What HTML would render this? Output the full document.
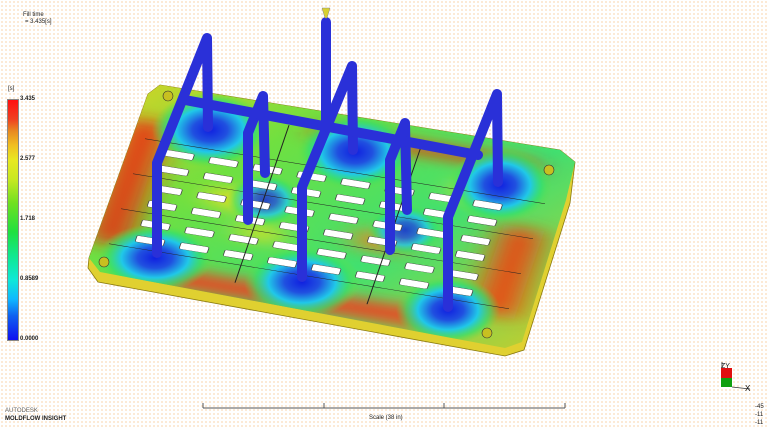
<!DOCTYPE html>
<html><head><meta charset="utf-8"><style>
html,body{margin:0;padding:0}
body{width:768px;height:428px;overflow:hidden;position:relative;background-color:#fff;
background-image:radial-gradient(circle,rgba(245,190,130,0.55) 0.7px,transparent 1px);background-size:4px 4px;
font-family:"Liberation Sans",sans-serif;}
.t{position:absolute;font-size:6px;color:#222;line-height:7px;white-space:nowrap}
</style></head><body>
<div class="t" style="left:23px;top:12px">Fill time</div>
<div class="t" style="left:25px;top:19px">= 3.435[s]</div>
<div class="t" style="left:8px;top:86px">[s]</div>
<div style="position:absolute;left:7px;top:99px;width:10px;height:240px;border:1px solid #888;background:linear-gradient(#ff1010 0%,#f04020 8%,#e88a20 13%,#f0c020 19%,#e8e820 25%,#c8e820 33%,#70e020 43%,#20e040 55%,#10e890 65%,#10e8d8 75%,#10b8ff 83%,#1060f0 90%,#1010f0 100%)"></div>
<div class="t" style="left:20px;top:96px;font-weight:bold">3.435</div>
<div class="t" style="left:20px;top:156px;font-weight:bold">2.577</div>
<div class="t" style="left:20px;top:216px;font-weight:bold">1.718</div>
<div class="t" style="left:20px;top:276px;font-weight:bold">0.8589</div>
<div class="t" style="left:20px;top:336px;font-weight:bold">0.0000</div>
<div class="t" style="left:5px;top:408px;color:#666">AUTODESK</div>
<div class="t" style="left:5px;top:416px;font-weight:bold">MOLDFLOW INSIGHT</div>
<div class="t" style="left:369px;top:415px">Scale (38 in)</div>
<div class="t" style="left:755px;top:404px">-45</div>
<div class="t" style="left:755px;top:412px">-11</div>
<div class="t" style="left:755px;top:420px">-11</div>
<svg width="768" height="428" style="position:absolute;left:0;top:0">
<defs>
<clipPath id="pc"><polygon points="160,85 560,150 575,162 566,200 522,342 505,348 100,272 89,258 148,94"/></clipPath>
<radialGradient id="b"><stop offset="0" stop-color="#1020e0"/><stop offset="0.3" stop-color="#2050e0"/><stop offset="0.58" stop-color="#20c8e8"/><stop offset="0.8" stop-color="#30e070" stop-opacity="0.7"/><stop offset="1" stop-color="#60e040" stop-opacity="0"/></radialGradient>
<linearGradient id="base" x1="0" y1="0" x2="1" y2="1"><stop offset="0" stop-color="#e8d020"/><stop offset="0.3" stop-color="#70e040"/><stop offset="0.6" stop-color="#40e070"/><stop offset="1" stop-color="#e0c820"/></linearGradient>
<filter id="bl"><feGaussianBlur stdDeviation="4"/></filter>
</defs>
<polygon points="160,85 560,150 575,162 570,203 524,350 505,356 98,282 88,268 89,258 148,94" fill="#e0d030" stroke="#8a7a10" stroke-width="0.8"/>
<g clip-path="url(#pc)">
<rect x="80" y="80" width="500" height="290" fill="url(#base)"/>
<g transform="matrix(4,0.65,-0.6,1.75,160,95)" filter="url(#bl)">
<rect x="-5" y="15" width="9" height="70" fill="#f02010"/>
<rect x="40" y="3" width="55" height="6" fill="#f03010"/>
<rect x="92" y="40" width="10" height="50" fill="#f04010"/>
<rect x="15" y="93" width="70" height="10" fill="#f04020"/>
<rect x="20" y="45" width="12" height="10" fill="#f0e020"/>
<rect x="58" y="55" width="12" height="10" fill="#f08020"/>
<rect x="45" y="80" width="10" height="12" fill="#f0e020"/>
<rect x="78" y="20" width="10" height="10" fill="#f0e020"/>
<rect x="30" y="62" width="10" height="8" fill="#e8e020"/>
</g>
<g>
<ellipse cx="210" cy="130" rx="58" ry="38" fill="url(#b)"/>
<ellipse cx="355" cy="152" rx="58" ry="38" fill="url(#b)"/>
<ellipse cx="500" cy="185" rx="52" ry="38" fill="url(#b)"/>
<ellipse cx="155" cy="258" rx="58" ry="34" fill="url(#b)"/>
<ellipse cx="302" cy="282" rx="58" ry="36" fill="url(#b)"/>
<ellipse cx="448" cy="310" rx="52" ry="34" fill="url(#b)"/>
<ellipse cx="265" cy="200" rx="38" ry="26" fill="url(#b)" opacity="0.8"/>
<ellipse cx="405" cy="230" rx="38" ry="26" fill="url(#b)" opacity="0.8"/>
</g>
<g transform="matrix(4,0.65,-0.6,1.75,160,95)" fill="#fff" stroke="#444" stroke-width="0.2">
<g id="r1"><rect x="6" y="29" width="7" height="3.6" rx="0.6"/><rect x="17" y="29" width="7" height="3.6" rx="0.6"/><rect x="28" y="29" width="7" height="3.6" rx="0.6"/><rect x="39" y="29" width="7" height="3.6" rx="0.6"/><rect x="50" y="29" width="7" height="3.6" rx="0.6"/><rect x="61" y="29" width="7" height="3.6" rx="0.6"/><rect x="72" y="29" width="7" height="3.6" rx="0.6"/><rect x="83" y="29" width="7" height="3.6" rx="0.6"/></g>
<use href="#r1" y="9"/><use href="#r1" y="20"/><use href="#r1" y="29"/><use href="#r1" y="40"/><use href="#r1" y="49"/>
</g>
<g transform="matrix(4,0.65,-0.6,1.75,160,95)" stroke="#222" stroke-width="0.25" fill="none">
<line x1="0" y1="25" x2="100" y2="25"/><line x1="0" y1="45" x2="100" y2="45"/><line x1="0" y1="65" x2="100" y2="65"/><line x1="0" y1="85" x2="100" y2="85"/>
<line x1="33" y1="5" x2="33" y2="95"/><line x1="66" y1="5" x2="66" y2="95"/>
</g>
</g>
<g stroke="#2a30d8" stroke-width="10" stroke-linecap="round" fill="none" stroke-linejoin="round">
<polyline points="157,253 157,163 207,38 208,127"/>
<polyline points="248,220 248,133 263,96 265,173"/>
<polyline points="302,277 302,187 352,66 353,150"/>
<polyline points="390,250 390,160 405,123 407,210"/>
<polyline points="448,307 448,217 497,94 498,182"/>
<line x1="185" y1="100" x2="478" y2="155"/>
<line x1="326" y1="22" x2="326" y2="125"/>
</g>
<polygon points="322,8 330,8 327,18 325,18" fill="#d8d030" stroke="#888" stroke-width="0.5"/>
<g fill="#c8c020" stroke="#333" stroke-width="0.6"><circle cx="168" cy="96" r="5"/><circle cx="549" cy="170" r="5"/><circle cx="104" cy="262" r="5"/><circle cx="487" cy="333" r="5"/></g>
<g stroke="#555" stroke-width="1"><line x1="203" y1="408" x2="565" y2="408"/><line x1="203" y1="403" x2="203" y2="408"/><line x1="324" y1="403" x2="324" y2="408"/><line x1="444" y1="403" x2="444" y2="408"/><line x1="565" y1="403" x2="565" y2="408"/></g>
<rect x="721" y="368" width="11" height="10" fill="#e01010"/>
<rect x="721" y="378" width="11" height="9" fill="#10a010"/>
<line x1="732" y1="387" x2="750" y2="389" stroke="#333" stroke-width="0.8"/>
<line x1="722" y1="368" x2="722" y2="362" stroke="#333" stroke-width="0.8"/>
<text x="721" y="368" font-size="7" fill="#111" font-family="Liberation Sans">ZY</text>
<text x="745" y="391" font-size="8" fill="#111" font-family="Liberation Sans">X</text>
</svg>
</body></html>
